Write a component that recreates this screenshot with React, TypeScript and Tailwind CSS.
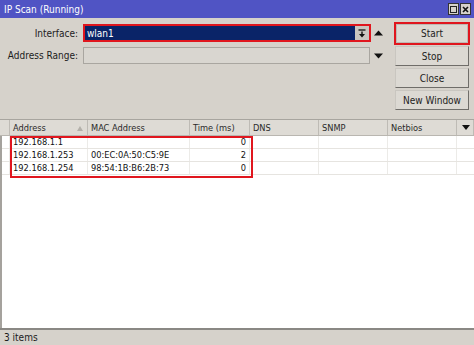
import React from "react";

const rows = [
  { addr: "192.168.1.1", mac: "", time: "0" },
  { addr: "192.168.1.253", mac: "00:EC:0A:50:C5:9E", time: "2" },
  { addr: "192.168.1.254", mac: "98:54:1B:B6:2B:73", time: "0" },
];

const cols = [
  { w: "w-[10px]", label: "" },
  { w: "w-[78px]", label: "Address" },
  { w: "w-[102px]", label: "MAC Address" },
  { w: "w-[60px]", label: "Time (ms)" },
  { w: "w-[69px]", label: "DNS" },
  { w: "w-[69px]", label: "SNMP" },
  { w: "w-[69px]", label: "Netbios" },
  { w: "flex-1", label: "" },
];

function Btn({ children }: { children: React.ReactNode }) {
  return (
    <div className="h-[20px] w-[74px] bg-[#dcd9d3] border border-t-[#c9c6c0] border-l-[#c9c6c0] border-r-[#6f6d69] border-b-[#6f6d69] flex items-center justify-center text-[10px] text-[#1c1c1c]">
      {children}
    </div>
  );
}

export default function App() {
  return (
    <div
      className="w-[474px] h-[345px] flex flex-col bg-[#d6d2cb] overflow-hidden relative"
      style={{ fontFamily: '"DejaVu Sans Condensed", "DejaVu Sans", sans-serif' }}
    >
      {/* title bar */}
      <div className="h-[18px] bg-[#5054c4] flex items-center justify-between pl-[4px] pr-[3px] text-white text-[10px] shrink-0">
        <span>IP Scan (Running)</span>
        <div className="flex gap-[1px] items-center">
          <div className="w-[11px] h-[12px] bg-[#d6d2cb] border border-[#333] flex items-center justify-center">
            <div className="w-[7px] h-[7px] border border-[#222]" />
          </div>
          <div className="w-[11px] h-[12px] bg-[#d6d2cb] border border-[#333] flex items-center justify-center">
            <svg width="7" height="7" viewBox="0 0 7 7">
              <path d="M1 1 L6 6 M6 1 L1 6" stroke="#111" strokeWidth="1.6" />
            </svg>
          </div>
        </div>
      </div>

      {/* form */}
      <div className="h-[101px] flex shrink-0 text-[#1c1c1c]">
        <div className="w-[394px] flex flex-col pt-[6px] gap-[4px]">
          <div className="flex items-center h-[18px]">
            <div className="w-[78px] text-right text-[10px]">Interface:</div>
            <div className="ml-[5px] w-[288px] h-[18px] border-2 border-[#e0161e] flex">
              <div className="flex-1 bg-[#0a2468] text-white text-[10px] flex items-center pl-[2px]">wlan1</div>
              <div className="w-[14px] bg-[#c9c6c0] flex items-center justify-center">
                <svg width="8" height="9" viewBox="0 0 8 9">
                  <path d="M0.5 1 H7.5" stroke="#111" strokeWidth="1.3" />
                  <path d="M4 2.5 V6" stroke="#111" strokeWidth="1.4" />
                  <path d="M1 5 L4 8.5 L7 5 Z" fill="#111" />
                </svg>
              </div>
            </div>
            <svg className="ml-[3px]" width="9" height="6" viewBox="0 0 9 6">
              <path d="M0 5.5 L4.5 0.5 L9 5.5 Z" fill="#111" />
            </svg>
          </div>
          <div className="flex items-center h-[17px] mt-[1px]">
            <div className="w-[78px] text-right text-[10px]">Address Range:</div>
            <div className="ml-[5px] w-[287px] h-[17px] border border-[#a9a6a0] bg-[#d9d6d0]" />
            <svg className="ml-[4px]" width="9" height="6" viewBox="0 0 9 6">
              <path d="M0 0.5 L4.5 5.5 L9 0.5 Z" fill="#111" />
            </svg>
          </div>
        </div>
        <div className="flex flex-col pt-[4px] gap-[2px]">
          <div className="w-[76px] h-[23px] border-2 border-[#e0161e] -mb-[1px] flex">
            <div className="flex-1 bg-[#dcd9d3] border border-[#bdbab4] flex items-center justify-center text-[10px]">
              Start
            </div>
          </div>
          <div className="pl-[1px] flex flex-col gap-[2px]">
            <Btn>Stop</Btn>
            <Btn>Close</Btn>
            <Btn>New Window</Btn>
          </div>
        </div>
      </div>

      {/* table */}
      <div className="flex-1 flex flex-col bg-white border-t border-[#a8a59f] relative">
        <div className="h-[16px] flex bg-[#dedbd5] border-b border-[#b9b6b0] text-[9.2px] text-[#2a2a2a] shrink-0">
          {cols.map((c, i) => (
            <div
              key={i}
              className={`${c.w} h-full border-r border-[#bebbb5] flex items-center pl-[3px] relative`}
            >
              {c.label}
              {i === 1 && (
                <svg className="absolute right-[4px] top-[6px]" width="6" height="5" viewBox="0 0 6 5">
                  <path d="M0 5 L3 0 L6 5 Z" fill="#b3b0aa" />
                </svg>
              )}
              {i === 7 && (
                <svg className="ml-[2px]" width="8" height="5" viewBox="0 0 8 5">
                  <path d="M0 0 L4 5 L8 0 Z" fill="#111" />
                </svg>
              )}
            </div>
          ))}
        </div>
        <div className="flex-1 flex flex-col border-l-2 border-[#a5a29d] text-[9.2px] text-[#111]">
          {rows.map((r, ri) => (
            <div key={ri} className="h-[13px] flex border-b border-[#e6e4e0]">
              <div className="w-[8px] border-r border-[#ecebe8]" />
              <div className="w-[78px] border-r border-[#ecebe8] pl-[3px] flex items-center">{r.addr}</div>
              <div className="w-[102px] border-r border-[#ecebe8] pl-[3px] flex items-center">{r.mac}</div>
              <div className="w-[60px] border-r border-[#ecebe8] pr-[3px] flex items-center justify-end">{r.time}</div>
              <div className="w-[69px] border-r border-[#ecebe8]" />
              <div className="w-[69px] border-r border-[#ecebe8]" />
              <div className="w-[69px] border-r border-[#ecebe8]" />
              <div className="flex-1" />
            </div>
          ))}
        </div>
        {/* annotation box around rows */}
        <div className="absolute left-[10px] top-[16px] w-[243px] h-[42px] border-2 border-[#e0161e] pointer-events-none" />
      </div>

      {/* status bar */}
      <div className="h-[17px] shrink-0 border-t-2 border-[#8a8884] bg-[#d6d2cb] flex items-center pl-[4px] text-[10px] text-[#1c1c1c]">
        3 items
      </div>
    </div>
  );
}
